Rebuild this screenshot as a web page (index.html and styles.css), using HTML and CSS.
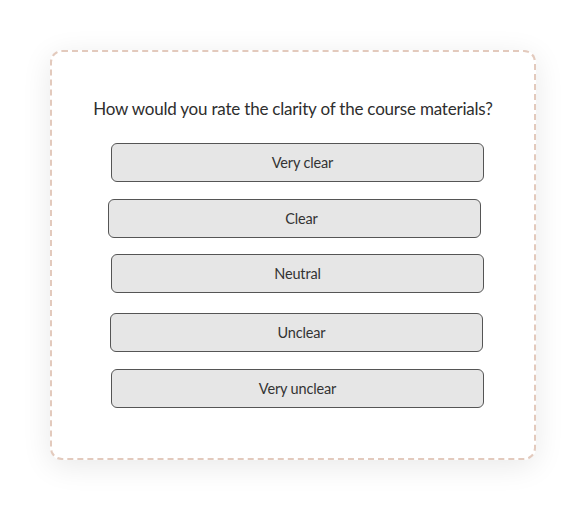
FILE: index.html
```html
<!DOCTYPE html>
<html lang="en">
<head>
<meta charset="utf-8">
<title>Survey question</title>
<link rel="stylesheet" href="styles.css">
</head>
<body>
<main class="stage">
  <section class="card">
    <h1 class="question">How would you rate the clarity of the course materials?</h1>
    <div class="options">
      <button class="option opt-1" type="button">Very clear</button>
      <button class="option opt-2" type="button">Clear</button>
      <button class="option opt-3" type="button">Neutral</button>
      <button class="option opt-4" type="button">Unclear</button>
      <button class="option opt-5" type="button">Very unclear</button>
    </div>
  </section>
</main>
</body>
</html>
```

FILE: styles.css
```css
html, body {
  margin: 0;
  padding: 0;
  background: #ffffff;
}

.stage {
  width: 586px;
  height: 510px;
  display: flex;
  align-items: center;
  justify-content: center;
  font-family: Lato, "Open Sans", sans-serif;
  color: #333333;
}

.card {
  box-sizing: border-box;
  width: 486px;
  height: 410px;
  border: 2px dashed #e3cabd;
  border-radius: 12px;
  background: #ffffff;
  box-shadow: 0 6px 30px rgba(0, 0, 0, 0.09);
  padding: 45px 0 0 0;
  display: flex;
  flex-direction: column;
}

.question {
  margin: 0;
  font-size: 17px;
  font-weight: 400;
  letter-spacing: -0.2px;
  line-height: 24px;
  text-align: center;
  color: #2e2e2e;
}

.options {
  display: flex;
  flex-direction: column;
  align-items: flex-start;
  padding-left: 59px;
  margin-top: 22px;
}

.option {
  box-sizing: border-box;
  width: 373px;
  height: 39px;
  margin: 0;
  padding: 0;
  border: 1.5px solid #555555;
  border-radius: 6px;
  background: #e6e6e6;
  font-family: inherit;
  font-size: 14.5px;
  letter-spacing: -0.15px;
  color: #333333;
  text-align: center;
}

.opt-1 { padding-left: 10px; }
.opt-2 { margin: 17px 0 0 -3px; padding-left: 14px; }
.opt-3 { margin-top: 16px; }
.opt-4 { margin: 20px 0 0 -1px; padding-left: 10px; }
.opt-5 { margin-top: 17px; }
```
